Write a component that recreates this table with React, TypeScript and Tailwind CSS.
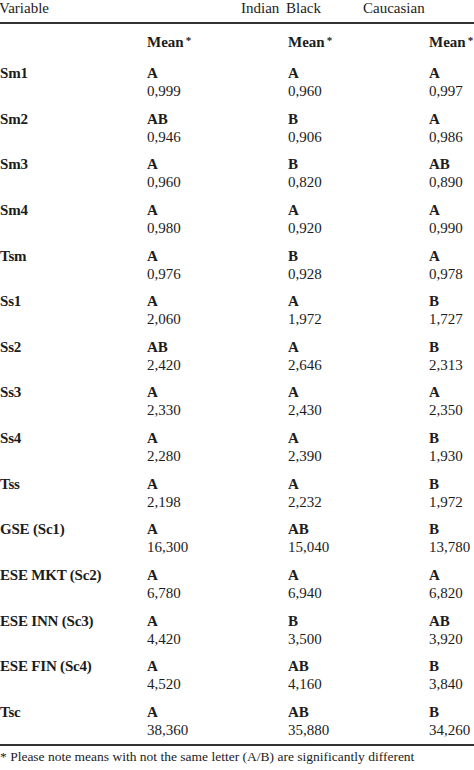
import React from 'react';

type Cell = { grade: string; value: string };
type Row = { label: string; cells: Cell[] };

const rows: Row[] = [
  { label: 'Sm1', cells: [{ grade: 'A', value: '0,999' }, { grade: 'A', value: '0,960' }, { grade: 'A', value: '0,997' }] },
  { label: 'Sm2', cells: [{ grade: 'AB', value: '0,946' }, { grade: 'B', value: '0,906' }, { grade: 'A', value: '0,986' }] },
  { label: 'Sm3', cells: [{ grade: 'A', value: '0,960' }, { grade: 'B', value: '0,820' }, { grade: 'AB', value: '0,890' }] },
  { label: 'Sm4', cells: [{ grade: 'A', value: '0,980' }, { grade: 'A', value: '0,920' }, { grade: 'A', value: '0,990' }] },
  { label: 'Tsm', cells: [{ grade: 'A', value: '0,976' }, { grade: 'B', value: '0,928' }, { grade: 'A', value: '0,978' }] },
  { label: 'Ss1', cells: [{ grade: 'A', value: '2,060' }, { grade: 'A', value: '1,972' }, { grade: 'B', value: '1,727' }] },
  { label: 'Ss2', cells: [{ grade: 'AB', value: '2,420' }, { grade: 'A', value: '2,646' }, { grade: 'B', value: '2,313' }] },
  { label: 'Ss3', cells: [{ grade: 'A', value: '2,330' }, { grade: 'A', value: '2,430' }, { grade: 'A', value: '2,350' }] },
  { label: 'Ss4', cells: [{ grade: 'A', value: '2,280' }, { grade: 'A', value: '2,390' }, { grade: 'B', value: '1,930' }] },
  { label: 'Tss', cells: [{ grade: 'A', value: '2,198' }, { grade: 'A', value: '2,232' }, { grade: 'B', value: '1,972' }] },
  { label: 'GSE (Sc1)', cells: [{ grade: 'A', value: '16,300' }, { grade: 'AB', value: '15,040' }, { grade: 'B', value: '13,780' }] },
  { label: 'ESE MKT (Sc2)', cells: [{ grade: 'A', value: '6,780' }, { grade: 'A', value: '6,940' }, { grade: 'A', value: '6,820' }] },
  { label: 'ESE INN (Sc3)', cells: [{ grade: 'A', value: '4,420' }, { grade: 'B', value: '3,500' }, { grade: 'AB', value: '3,920' }] },
  { label: 'ESE FIN (Sc4)', cells: [{ grade: 'A', value: '4,520' }, { grade: 'AB', value: '4,160' }, { grade: 'B', value: '3,840' }] },
  { label: 'Tsc', cells: [{ grade: 'A', value: '38,360' }, { grade: 'AB', value: '35,880' }, { grade: 'B', value: '34,260' }] },
];

const cols = 'grid grid-cols-[147px_141px_141px_1fr]';

export default function App() {
  return (
    <div className="w-[474px] h-[770px] overflow-hidden bg-white text-[#1c1c1c] font-['Liberation_Serif',serif] text-[15px]">
      {/* column headers */}
      <div className="flex h-[22px] pt-[1px] leading-[14px] -ml-[1px]">
        <span className="w-[242px]">Variable</span>
        <span className="w-[45px]">Indian</span>
        <span className="w-[77px]">Black</span>
        <span>Caucasian</span>
      </div>
      <div className="h-[2px] bg-[#333]" />

      <div className={`${cols} h-[40px] pt-[8px] leading-[16px] font-bold`}>
        <span />
        {[0, 1, 2].map((i) => (
          <span key={i}>
            Mean<span className="ml-[2px] text-[11px] align-[3px]">*</span>
          </span>
        ))}
      </div>

      {rows.map((row, idx) => (
        <div
          key={row.label}
          className={`${cols} leading-[18px] ${idx === rows.length - 1 ? 'h-[41px]' : 'h-[45.64px]'}`}
        >
          <span className="font-bold tracking-[-0.2px]">{row.label}</span>
          {row.cells.map((c, i) => (
            <div key={i} className="flex flex-col">
              <span className="font-bold">{c.grade}</span>
              <span>{c.value}</span>
            </div>
          ))}
        </div>
      ))}

      <div className="h-[2px] bg-[#333]" />
      <p className="mt-[3px] leading-[16px] text-[13.5px]">
        * Please note means with not the same letter (A/B) are significantly different
      </p>
    </div>
  );
}
